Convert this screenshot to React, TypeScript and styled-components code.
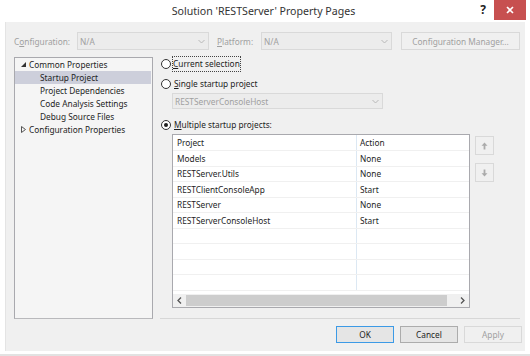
import React from 'react';
import styled, { createGlobalStyle } from 'styled-components';

const Global = createGlobalStyle`
  html, body { margin: 0; padding: 0; background: #ffffff; }
  body {
    font-family: "Noto Sans", "Open Sans", sans-serif;
    font-size: 8.3px;
    color: #1e1e1e;
  }
  #root { width: 530px; height: 356px; }
`;

const Window = styled.div`
  width: 530px;
  height: 356px;
  box-sizing: border-box;
  background: #ffffff;
  display: flex;
  flex-direction: column;
  padding-bottom: 3px;
  border-bottom: 2px solid #e2e2e2;
`;

const TitleBar = styled.div`
  height: 22px;
  flex: none;
  display: grid;
  grid-template-columns: 1fr auto 1fr;
  align-items: start;
`;

const Title = styled.div`
  grid-column: 2;
  font-size: 10.6px;
  line-height: 22px;
  color: #333333;
  margin-right: 3px;
`;

const Controls = styled.div`
  grid-column: 3;
  justify-self: end;
  display: flex;
  align-items: flex-start;
  margin-right: 4px;
`;

const Help = styled.div`
  width: 14px;
  margin-right: 4px;
  font-size: 12px;
  font-weight: bold;
  line-height: 20px;
  color: #222222;
  text-align: center;
`;

const Close = styled.div`
  width: 32px;
  height: 20px;
  background: #c75050;
  display: flex;
  align-items: center;
  justify-content: center;
`;

const Client = styled.div`
  flex: 1;
  margin: 0 5px;
  background: #f0f0f0;
  border-left: 1px solid #e4e4e4;
  padding: 10px 3px 8px 8px;
  display: flex;
  flex-direction: column;
`;

const ConfigRow = styled.div`
  display: flex;
  align-items: center;
  height: 18px;
  flex: none;
`;

const DisabledLabel = styled.div<{ $w: number }>`
  width: ${p => p.$w}px;
  color: #a0a0a0;
  flex: none;
`;

const Combo = styled.div<{ $w: number; $h?: number }>`
  width: ${p => p.$w}px;
  height: ${p => p.$h ?? 18}px;
  box-sizing: border-box;
  flex: none;
  border: 1px solid #d9d9d9;
  background: #ececec;
  color: #a0a0a0;
  display: flex;
  align-items: center;
  padding-left: 2px;
`;

const ComboText = styled.div`
  flex: 1;
`;

const ComboArrow = styled.div`
  width: 14px;
  display: flex;
  justify-content: center;
`;

const Gap = styled.div<{ $w: number }>`
  width: ${p => p.$w}px;
  flex: none;
`;

const Button = styled.div<{ $w: number; $h: number; $disabled?: boolean; $default?: boolean }>`
  width: ${p => p.$w}px;
  height: ${p => p.$h}px;
  box-sizing: border-box;
  flex: none;
  display: flex;
  align-items: center;
  justify-content: center;
  border: 1px solid ${p => (p.$default ? '#3c9ae6' : p.$disabled ? '#d9d9d9' : '#acacac')};
  background: ${p => (p.$disabled ? '#f0f0f0' : '#e5e5e5')};
  color: ${p => (p.$disabled ? '#a0a0a0' : '#1e1e1e')};
`;

const Main = styled.div`
  display: flex;
  margin-top: 7px;
  height: 262px;
  flex: none;
`;

const Tree = styled.div`
  width: 139px;
  height: 262px;
  box-sizing: border-box;
  flex: none;
  border: 1px solid #a9a9ae;
  border-bottom-color: #b9b9bc;
  background: #f5f5f5;
  padding-top: 0px;
`;

const TreeRow = styled.div<{ $level: number; $selected?: boolean }>`
  height: 13px;
  display: flex;
  align-items: center;
  padding-left: ${p => (p.$level === 0 ? 6 : 25)}px;
  background: ${p => (p.$selected ? '#cdcfdb' : 'transparent')};
  margin-right: 1px;
  white-space: nowrap;
`;

const Expander = styled.div`
  width: 8px;
  display: flex;
  align-items: center;
`;

const RightCol = styled.div`
  flex: 1;
  margin-left: 7px;
  margin-right: 2px;
  border-bottom: 1px solid #d7d7d7;
  display: flex;
  flex-direction: column;
`;

const RadioRow = styled.div<{ $mt: number }>`
  height: 16px;
  margin-top: ${p => p.$mt}px;
  display: flex;
  align-items: center;
  flex: none;
`;

const RadioCircle = styled.div<{ $checked?: boolean }>`
  width: 10px;
  height: 10px;
  box-sizing: border-box;
  border-radius: 50%;
  border: 1px solid #333333;
  background: #ffffff;
  display: flex;
  align-items: center;
  justify-content: center;
  margin-left: 1px;
  &::after {
    content: '';
    display: ${p => (p.$checked ? 'block' : 'none')};
    width: 4px;
    height: 4px;
    border-radius: 50%;
    background: #1e1e1e;
  }
`;

const RadioLabel = styled.div<{ $focus?: boolean }>`
  margin-left: ${p => (p.$focus ? 1 : 3)}px;
  padding: ${p => (p.$focus ? '2px 1px 2px 1px' : '0')};
  outline: ${p => (p.$focus ? '1px dotted #444444' : 'none')};
  outline-offset: -1px;
  line-height: 12px;
`;

const Indented = styled.div<{ $mt: number }>`
  margin-left: 12px;
  margin-top: ${p => p.$mt}px;
  display: flex;
  flex: none;
`;

const Grid = styled.div`
  width: 298px;
  height: 174px;
  box-sizing: border-box;
  border: 1px solid #a9a9ae;
  background: #ffffff;
  display: flex;
  flex-direction: column;
`;

const TableArea = styled.div`
  flex: 1;
  overflow: hidden;
`;

const Row = styled.div<{ $h: number }>`
  height: ${p => p.$h}px;
  box-sizing: border-box;
  display: grid;
  grid-template-columns: 184px 1fr;
  border-bottom: 1px solid #f0f0f0;
`;

const Cell = styled.div<{ $first?: boolean }>`
  display: flex;
  align-items: center;
  padding-left: ${p => (p.$first ? 4 : 3)}px;
  border-right: ${p => (p.$first ? '1px solid #dce8f3' : 'none')};
  white-space: nowrap;
`;

const ScrollBar = styled.div`
  height: 13px;
  flex: none;
  display: flex;
  align-items: center;
  background: #f0f0f0;
`;

const ScrollArrow = styled.div`
  width: 13px;
  display: flex;
  justify-content: center;
  align-items: center;
`;

const Thumb = styled.div`
  flex: 1;
  height: 11px;
  margin: 0 9px 0 0;
  background: #cdcdcd;
`;

const MoveCol = styled.div`
  margin-left: 5px;
  display: flex;
  flex-direction: column;
  gap: 8px;
  padding-top: 2px;
`;

const Footer = styled.div`
  margin-top: 7px;
  display: flex;
  justify-content: flex-end;
  gap: 6px;
`;

const Chevron = () => (
  <svg width="7" height="5" viewBox="0 0 7 5">
    <path d="M0.5 1 L3.5 4 L6.5 1" fill="none" stroke="#b8b8b8" strokeWidth="1" />
  </svg>
);

const TriOpen = () => (
  <svg width="5" height="5" viewBox="0 0 5 5">
    <path d="M5 0 L5 5 L0 5 Z" fill="#333333" />
  </svg>
);

const TriClosed = () => (
  <svg width="5" height="7" viewBox="0 0 5 7">
    <path d="M0.5 0.5 L4.5 3.5 L0.5 6.5 Z" fill="none" stroke="#555555" strokeWidth="1" />
  </svg>
);

const ArrowIcon = ({ up }: { up: boolean }) => (
  <svg width="7" height="8" viewBox="0 0 7 8" style={{ transform: up ? 'none' : 'rotate(180deg)' }}>
    <path d="M3.5 0.5 L6.5 3.8 L4.4 3.8 L4.4 7.5 L2.6 7.5 L2.6 3.8 L0.5 3.8 Z" fill="#ababab" />
  </svg>
);

const ScrollChevron = ({ left }: { left: boolean }) => (
  <svg width="5" height="7" viewBox="0 0 5 7">
    <path d={left ? 'M4 0.5 L1 3.5 L4 6.5' : 'M1 0.5 L4 3.5 L1 6.5'} fill="none" stroke="#555555" strokeWidth="1.3" />
  </svg>
);

const projects: [string, string][] = [
  ['Models', 'None'],
  ['RESTServer.Utils', 'None'],
  ['RESTClientConsoleApp', 'Start'],
  ['RESTServer', 'None'],
  ['RESTServerConsoleHost', 'Start'],
  ['', ''],
  ['', ''],
  ['', ''],
  ['', ''],
];

export default function App() {
  return (
    <>
      <Global />
      <Window>
        <TitleBar>
          <Title>Solution 'RESTServer' Property Pages</Title>
          <Controls>
            <Help>?</Help>
            <Close>
              <svg width="8" height="8" viewBox="0 0 8 8">
                <path d="M1 1 L7 7 M7 1 L1 7" stroke="#ffffff" strokeWidth="1.6" />
              </svg>
            </Close>
          </Controls>
        </TitleBar>
        <Client>
          <ConfigRow>
            <DisabledLabel $w={63}>
              C<u>o</u>nfiguration:
            </DisabledLabel>
            <Combo $w={132}>
              <ComboText>N/A</ComboText>
              <ComboArrow>
                <Chevron />
              </ComboArrow>
            </Combo>
            <Gap $w={8} />
            <DisabledLabel $w={44}>
              <u>P</u>latform:
            </DisabledLabel>
            <Combo $w={131}>
              <ComboText>N/A</ComboText>
              <ComboArrow>
                <Chevron />
              </ComboArrow>
            </Combo>
            <Gap $w={9} />
            <Button $w={119} $h={18} $disabled>
              Configuration Manager...
            </Button>
          </ConfigRow>
          <Main>
            <Tree>
              <TreeRow $level={0}>
                <Expander>
                  <TriOpen />
                </Expander>
                Common Properties
              </TreeRow>
              <TreeRow $level={1} $selected>
                Startup Project
              </TreeRow>
              <TreeRow $level={1}>Project Dependencies</TreeRow>
              <TreeRow $level={1}>Code Analysis Settings</TreeRow>
              <TreeRow $level={1}>Debug Source Files</TreeRow>
              <TreeRow $level={0}>
                <Expander>
                  <TriClosed />
                </Expander>
                Configuration Properties
              </TreeRow>
            </Tree>
            <RightCol>
              <RadioRow $mt={-1}>
                <RadioCircle />
                <RadioLabel $focus>
                  <u>C</u>urrent selection
                </RadioLabel>
              </RadioRow>
              <RadioRow $mt={4}>
                <RadioCircle />
                <RadioLabel>
                  <u>S</u>ingle startup project
                </RadioLabel>
              </RadioRow>
              <Indented $mt={1}>
                <Combo $w={211} $h={16}>
                  <ComboText>RESTServerConsoleHost</ComboText>
                  <ComboArrow>
                    <Chevron />
                  </ComboArrow>
                </Combo>
              </Indented>
              <RadioRow $mt={8}>
                <RadioCircle $checked />
                <RadioLabel>
                  <u>M</u>ultiple startup projects:
                </RadioLabel>
              </RadioRow>
              <Indented $mt={1}>
                <Grid>
                  <TableArea>
                    <Row $h={16}>
                      <Cell $first>Project</Cell>
                      <Cell>Action</Cell>
                    </Row>
                    {projects.map(([name, action], i) => (
                      <Row $h={15.55} key={i}>
                        <Cell $first>{name}</Cell>
                        <Cell>{action}</Cell>
                      </Row>
                    ))}
                  </TableArea>
                  <ScrollBar>
                    <ScrollArrow>
                      <ScrollChevron left />
                    </ScrollArrow>
                    <Thumb />
                    <ScrollArrow>
                      <ScrollChevron left={false} />
                    </ScrollArrow>
                  </ScrollBar>
                </Grid>
                <MoveCol>
                  <Button $w={19} $h={19} $disabled>
                    <ArrowIcon up />
                  </Button>
                  <Button $w={19} $h={19} $disabled>
                    <ArrowIcon up={false} />
                  </Button>
                </MoveCol>
              </Indented>
            </RightCol>
          </Main>
          <Footer>
            <Button $w={58} $h={17} $default>
              OK
            </Button>
            <Button $w={58} $h={17}>
              Cancel
            </Button>
            <Button $w={58} $h={17} $disabled>
              Apply
            </Button>
          </Footer>
        </Client>
      </Window>
    </>
  );
}
